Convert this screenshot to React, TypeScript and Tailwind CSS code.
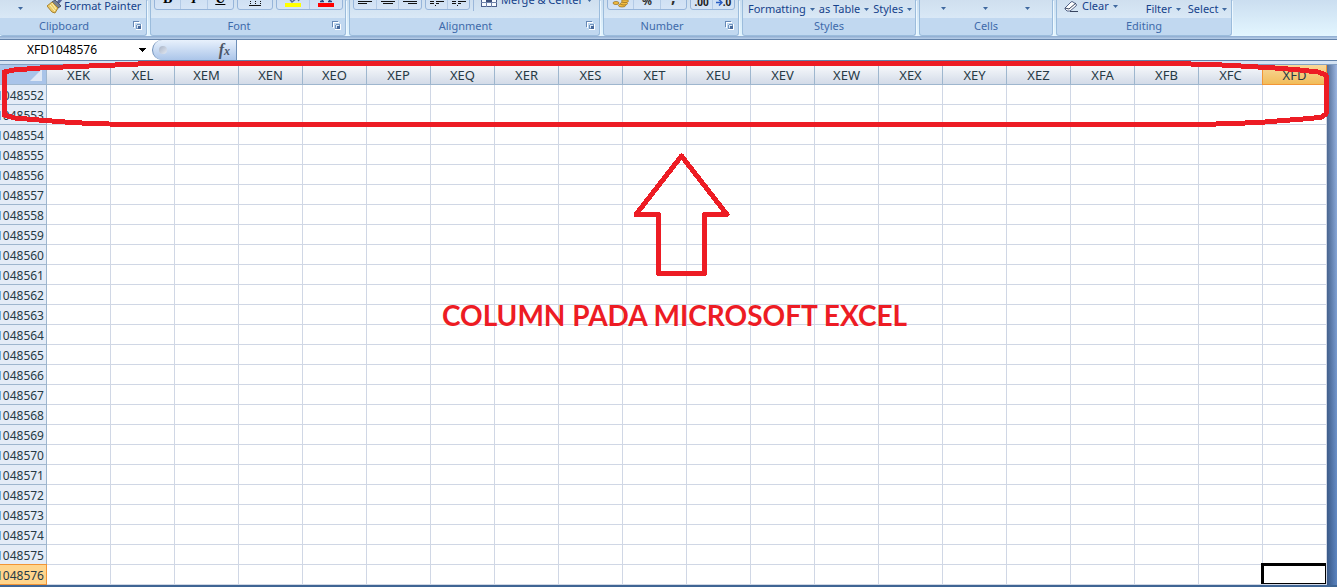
import type { ReactNode } from "react";

const columns = [
  "XEK", "XEL", "XEM", "XEN", "XEO", "XEP", "XEQ", "XER", "XES", "XET",
  "XEU", "XEV", "XEW", "XEX", "XEY", "XEZ", "XFA", "XFB", "XFC", "XFD",
];
const rows = Array.from({ length: 25 }, (_, i) => 1048552 + i);
const lastRow = 1048576;

function Caret() {
  return (
    <svg className="block h-[3px] w-[5px] shrink-0" viewBox="0 0 5 3" aria-hidden="true">
      <path d="M0 0h5L2.5 3z" fill="#3f689f" />
    </svg>
  );
}

function Launcher({ name }: { name: string }) {
  return (
    <button aria-label={`${name} options`} className="absolute right-1 top-[3px] size-[9px]">
      <svg className="block size-[9px]" viewBox="0 0 9 9" shapeRendering="crispEdges" aria-hidden="true">
        <path d="M.5 6V.5H6" fill="none" stroke="#6688b5" />
        <path d="M1.5 7V1.5H7M8.5 3v5.5H3" fill="none" stroke="#fff" />
        <path d="M4 3.5h3.5V7.5H3.5V4" fill="#dce9f7" stroke="#7395be" />
        <path d="M5 5h3v3H5z" fill="#47699b" />
      </svg>
    </button>
  );
}

function Group({
  name,
  width,
  body,
  launcher = false,
  children,
}: {
  name: string;
  width: string;
  body: string;
  launcher?: boolean;
  children: ReactNode;
}) {
  return (
    <section
      aria-label={name}
      className={`${width} shrink-0 overflow-hidden rounded-b-[3px] border border-t-0 border-[#9bbcdc] bg-[#c1d8f0] shadow-[1px_1px_0_#eef8ff]`}
    >
      <div className={`${body} flex h-[18px] items-end overflow-hidden bg-linear-to-b from-[#cfdfef] to-[#d9e8f6]`}>
        {children}
      </div>
      <div
        className={`${launcher ? "pr-[18px]" : "pr-0"} relative h-[15px] text-center leading-[15px] text-[#3e6aaa]`}
      >
        {name}
        {launcher && <Launcher name={name} />}
      </div>
    </section>
  );
}

function ButtonSet({ children, width }: { children: ReactNode; width: string }) {
  return (
    <div
      className={`${width} mb-2 flex h-[22px] shrink-0 divide-x divide-[#b3cae6] rounded-b-[3px] border border-[#97b5da] bg-linear-to-b from-[#c8daf0] to-[#d6e5f6]`}
    >
      {children}
    </div>
  );
}

function Tool({ label, children }: { label: string; children: ReactNode }) {
  return (
    <button aria-label={label} className="flex flex-1 items-end justify-center overflow-hidden">
      {children}
    </button>
  );
}

function Lines({ d }: { d: string }) {
  return (
    <svg className="block h-5 w-4" viewBox="0 0 16 20" shapeRendering="crispEdges" aria-hidden="true">
      <path d={d} fill="none" stroke="#111" />
    </svg>
  );
}

function TextTool({ children }: { children: ReactNode }) {
  return (
    <button className="flex h-4 shrink-0 items-center gap-1 whitespace-nowrap leading-4">
      {children}
      <Caret />
    </button>
  );
}

function Ribbon() {
  return (
    <div className="flex h-9 gap-[3px] overflow-hidden bg-linear-to-b from-[#cbdef0] to-[#e3f6ff] text-[11px] text-[#15428b]">
      <Group name="Clipboard" width="w-[147px] border-l-0" body="gap-6 pb-1 pl-[18px]" launcher>
        <button aria-label="Paste options" className="flex h-3 items-center">
          <Caret />
        </button>
        <button className="flex h-4 items-center gap-px whitespace-nowrap leading-4">
          <svg className="block h-4 w-4 shrink-0" viewBox="0 0 16 16" aria-hidden="true">
            <path d="M15 0l-5 6" stroke="#56679c" strokeWidth="3" />
            <path d="M8 2l6 6-3 2-6-6z" fill="#7a8291" stroke="#4d566b" />
            <path d="M5 4l6 6-3 5-3-1-5-6z" fill="#eccb68" stroke="#a88332" />
            <path d="M3 7l5 6M5 5l4 6" stroke="#fff3b8" />
          </svg>
          Format Painter
        </button>
      </Group>

      <Group name="Font" width="w-[196px]" body="gap-[3px] pl-[3px]" launcher>
        <ButtonSet width="w-20">
          <Tool label="Bold">
            <b className="font-['Liberation_Serif',serif] text-sm leading-5 text-black">B</b>
          </Tool>
          <Tool label="Italic">
            <i className="font-['Liberation_Serif',serif] text-sm font-bold leading-5 text-black">I</i>
          </Tool>
          <Tool label="Underline">
            <u className="font-['Liberation_Serif',serif] text-sm font-bold leading-5 text-black">U</u>
          </Tool>
        </ButtonSet>
        <ButtonSet width="w-9">
          <Tool label="Borders">
            <Lines d="M2 16.5h12M3 14.5h1M8 14.5h1M13 14.5h1M3 12.5h1M8 12.5h1M13 12.5h1" />
          </Tool>
        </ButtonSet>
        <ButtonSet width="w-[67px]">
          <Tool label="Fill color">
            <svg className="block h-5 w-4" viewBox="0 0 16 20" aria-hidden="true">
              <path d="M3 8l4 5 5-4M11 7l3 5" fill="none" stroke="#586b91" strokeWidth="1.5" />
              <path d="M0 14h16v4H0z" fill="#ff0" />
            </svg>
          </Tool>
          <Tool label="Font color">
            <svg className="block h-5 w-4" viewBox="0 0 16 20" aria-hidden="true">
              <path d="M2 12.5h4M10 12.5h4M4 12l4-9 4 9M5 9.5h6" fill="none" stroke="#28457c" strokeWidth="1.5" />
              <path d="M0 14h16v4H0z" fill="#f00" />
            </svg>
          </Tool>
        </ButtonSet>
      </Group>

      <Group name="Alignment" width="w-[251px]" body="gap-[3px] pl-[3px]" launcher>
        <ButtonSet width="w-[69px]">
          <Tool label="Align left"><Lines d="M1 12.5h14M1 14.5h9" /></Tool>
          <Tool label="Center"><Lines d="M1 12.5h14M3 14.5h10" /></Tool>
          <Tool label="Align right"><Lines d="M1 12.5h14M6 14.5h9" /></Tool>
        </ButtonSet>
        <ButtonSet width="w-[45px]">
          <Tool label="Decrease indent"><Lines d="M1 12.5h4M7 12.5h8M1 14.5h4M7 14.5h3M6 16.5h1" /></Tool>
          <Tool label="Increase indent"><Lines d="M1 12.5h4M7 12.5h8M1 14.5h4M7 14.5h3M6 16.5h1" /></Tool>
        </ButtonSet>
        <div className="mb-[7px] h-4 w-px bg-[#9bb7da]" />
        <div className="flex pb-[10px] pl-1">
          <button className="flex h-4 items-center gap-1 whitespace-nowrap leading-4">
            <svg className="block h-4 w-4" viewBox="0 0 16 16" shapeRendering="crispEdges" aria-hidden="true">
              <path d="M.5.5h15v14H.5z" fill="#f7fbff" stroke="#4c608c" />
              <path d="M0 10.5h16M5.5 11v4M10.5 11v4" stroke="#6f83aa" />
              <path d="M5 6h6v4H5z" fill="#3d4f78" />
            </svg>
            Merge &amp; Center
            <Caret />
          </button>
        </div>
      </Group>

      <Group name="Number" width="w-[136px]" body="gap-[3px] pl-[3px]" launcher>
        <ButtonSet width="w-20">
          <Tool label="Accounting format">
            <svg className="block h-5 w-5" viewBox="0 0 20 20" aria-hidden="true">
              <g fill="#f4bd3f" stroke="#8f6a1e" strokeWidth=".7">
                <ellipse cx="5" cy="14" rx="3" ry="1.5" />
                <ellipse cx="11" cy="16.5" rx="3.5" ry="1.5" />
                <ellipse cx="13" cy="14.5" rx="3.5" ry="1.5" />
                <ellipse cx="14" cy="12" rx="3.5" ry="1.5" />
                <ellipse cx="14" cy="9.5" rx="3.5" ry="1.5" />
              </g>
            </svg>
          </Tool>
          <Tool label="Percent style"><span className="font-bold leading-4 text-[#303030]">%</span></Tool>
          <Tool label="Comma style"><span className="text-base font-bold leading-6 text-[#303030]">,</span></Tool>
        </ButtonSet>
        <ButtonSet width="w-[45px]">
          <Tool label="Increase decimal">
            <span className="text-[10px] font-bold leading-[14px] text-[#222]">.00</span>
          </Tool>
          <Tool label="Decrease decimal">
            <span className="flex items-center text-[10px] font-bold leading-[14px] text-[#222]">
              <svg className="block h-[7px] w-[7px]" viewBox="0 0 7 7" aria-hidden="true">
                <path d="M0 3.5h5M3 .5l3 3-3 3" fill="none" stroke="#2a5ec4" strokeWidth="1.5" />
              </svg>
              .0
            </span>
          </Tool>
        </ButtonSet>
      </Group>

      <Group name="Styles" width="w-[174px]" body="gap-1 pl-[5px] pb-px">
        <TextTool>Formatting</TextTool>
        <TextTool>as Table</TextTool>
        <TextTool>Styles</TextTool>
      </Group>

      <Group name="Cells" width="w-[134px]" body="justify-center gap-[37px] pb-2 pr-0.5">
        <button aria-label="Insert"><Caret /></button>
        <button aria-label="Delete"><Caret /></button>
        <button aria-label="Format"><Caret /></button>
      </Group>

      <Group name="Editing" width="w-[176px]" body="gap-7 pl-[7px]">
        <div className="flex pb-1">
          <TextTool>
            <svg className="block h-3 w-3.5" viewBox="0 0 14 12" aria-hidden="true">
              <path d="M1 8l6-6q1-1 2 0l3 2q1 1 0 2l-6 5H3L1 9z" fill="#fff" stroke="#526387" />
              <path d="M1 8l4 1 7-6M6 11.5h8" fill="none" stroke="#38445e" />
            </svg>
            Clear
          </TextTool>
        </div>
        <div className="flex gap-[7px] pb-px">
          <TextTool>Filter</TextTool>
          <TextTool>Select</TextTool>
        </div>
      </Group>
    </div>
  );
}

function FormulaBar() {
  return (
    <div className="flex h-[21px] border-b border-[#6483aa] bg-white">
      <input
        aria-label="Name box"
        defaultValue="XFD1048576"
        className="w-32 shrink-0 pl-[27px] text-xs text-black outline-none"
      />
      <button aria-label="Show names" className="flex w-6 shrink-0 items-center justify-center pl-1">
        <svg className="block h-1 w-[7px]" viewBox="0 0 7 4" shapeRendering="crispEdges" aria-hidden="true">
          <path d="M0 0h7L3.5 4z" fill="#000" />
        </svg>
      </button>
      <div className="flex w-[85px] shrink-0 items-center justify-between rounded-l-full border-l border-r border-[#6e8fb8] bg-linear-to-b from-[#e8f1fc] to-[#abc5e9] px-1.5">
        <span className="size-2 rounded-full bg-linear-to-br from-[#a9b4c6] to-[#e2e8f2]" />
        <button
          aria-label="Insert function"
          className="font-['Liberation_Serif',serif] text-base font-bold italic leading-4 text-[#4b5666]"
        >
          f<span className="text-xs">x</span>
        </button>
      </div>
      <input aria-label="Formula" className="min-w-0 flex-1 px-1 text-xs outline-none" />
    </div>
  );
}

function Sheet() {
  return (
    <div className="flex">
      <table className="w-full min-w-0 flex-1 table-fixed border-separate border-spacing-0 bg-white text-xs text-[#263a45]">
        <thead className="text-[13px]">
          <tr>
            <th aria-label="Select all" className="h-5 w-[47px] border-b border-r border-[#9eb6ce] bg-[#a9c4e9] p-0">
              <svg className="ml-auto mr-1 block size-3" viewBox="0 0 12 12" aria-hidden="true">
                <path d="M12 0v12H0z" fill="#dfe8f5" />
              </svg>
            </th>
            {columns.map((name) => (
              <th
                key={name}
                scope="col"
                className={
                  name === "XFD"
                    ? "h-5 border-b border-r border-[#f29536] bg-linear-to-b from-[#f8d899] to-[#f1bc59] p-0 pt-0.5 font-normal leading-[17px] shadow-[-1px_0_0_#f29536]"
                    : "h-5 border-b border-r border-[#9eb6ce] bg-linear-to-b from-[#f8fafc] to-[#d3dbe8] p-0 pt-0.5 font-normal leading-[17px]"
                }
              >
                {name}
              </th>
            ))}
          </tr>
        </thead>
        <tbody>
          {rows.map((row) => (
            <tr key={row}>
              <th
                scope="row"
                className={
                  row === lastRow
                    ? "h-5 border-b border-r border-[#f29536] bg-[#ffd58d] p-0 font-normal shadow-[0_-1px_0_#f29536]"
                    : "h-5 border-b border-r border-[#9eb6ce] bg-[#e4ecf7] p-0 font-normal"
                }
              >
                <div className="flex justify-end overflow-hidden pr-0.5 pt-0.5 leading-[17px]">{row}</div>
              </th>
              {columns.map((name) => (
                <td key={name} className="relative h-5 border-b border-r border-[#d0d7e5] p-0">
                  {row === lastRow && name === "XFD" && (
                    <div className="absolute -left-0.5 -top-0.5 bottom-0 right-0 border-b border-l-[3px] border-r border-t-[3px] border-black bg-white" />
                  )}
                </td>
              ))}
            </tr>
          ))}
        </tbody>
      </table>
      <div className="flex w-2.5 shrink-0 bg-linear-to-b from-[#9db7e2] to-[#5a83bf]">
        <div className="flex-1 bg-linear-to-r from-[#203a6099] to-[#203a6000]" />
      </div>
    </div>
  );
}

function Annotations() {
  return (
    <div className="pointer-events-none absolute inset-x-0 top-0">
      <svg
        className="absolute left-0 top-0 h-[140px] w-full"
        viewBox="0 0 1337 140"
        preserveAspectRatio="none"
        aria-hidden="true"
      >
        <path
          d="M4 72L14 70 40 68 75 66.5 104 65.5 150 63.5H1175L1222 65 1250 66.5 1275 68 1300 70 1318 72 1326 75V114L1322 117 1310 118.5 1290 120 1265 122 1235 123.5 1198 124.5H128L90 123.5 65 122 45 120.5 15 118 4 115Z"
          fill="none"
          stroke="#ed1c24"
          strokeWidth="5"
          strokeLinejoin="round"
          shapeRendering="crispEdges"
        />
      </svg>
      <div className="flex flex-col items-center pt-[150px]">
        <svg className="ml-6 block h-32 w-[100px]" viewBox="0 0 100 128" aria-hidden="true">
          <path
            d="M50.5 6L96 64.5H73.5V123.5H27.5V64.5H5Z"
            fill="none"
            stroke="#ed1c24"
            strokeWidth="5"
            strokeLinejoin="round"
            shapeRendering="crispEdges"
          />
        </svg>
        <p className="ml-3 mt-[19px] whitespace-nowrap font-[Lato,sans-serif] text-[28px] font-bold leading-9 text-[#ed1c24]">
          COLUMN PADA MICROSOFT EXCEL
        </p>
      </div>
    </div>
  );
}

export default function App() {
  return (
    <main className="relative overflow-hidden bg-[#3f6594] pb-0.5 font-['Noto_Sans',sans-serif]">
      <Ribbon />
      <div className="h-1 border-b border-[#6483aa] bg-linear-to-b from-[#8dabcf] to-[#b9cfea]" />
      <FormulaBar />
      <div className="h-1 border-b border-[#83a0c4] bg-[#d5e3f3]" />
      <Sheet />
      <Annotations />
    </main>
  );
}
